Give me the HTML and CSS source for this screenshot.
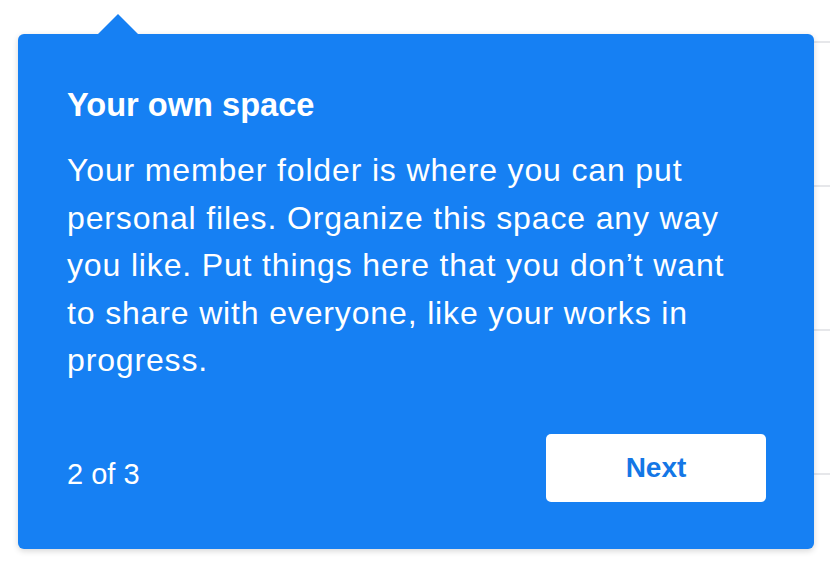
FILE: index.html
```html
<!DOCTYPE html>
<html lang="en">
<head>
<meta charset="utf-8">
<title>Your own space</title>
<link rel="stylesheet" href="styles.css">
</head>
<body>
<div class="page">
  <ul class="rows">
    <li class="row row-first"></li>
    <li class="row"></li>
    <li class="row"></li>
    <li class="row"></li>
  </ul>
</div>
<div class="tip" role="dialog" aria-labelledby="tip-title">
  <span class="tip-arrow"></span>
  <h2 class="tip-title" id="tip-title">Your own space</h2>
  <p class="tip-body">Your member folder is where you can put personal files. Organize this space any way you like. Put things here that you don’t want to share with everyone, like your works in progress.</p>
  <div class="tip-footer">
    <span class="tip-count">2 of 3</span>
    <button class="tip-next" type="button">Next</button>
  </div>
</div>
</body>
</html>
```

FILE: styles.css
```css
* { box-sizing: border-box; }
html, body { margin: 0; padding: 0; background: #ffffff; }
body {
  width: 830px;
  height: 570px;
  overflow: hidden;
  position: relative;
  font-family: "Liberation Sans", Arial, sans-serif;
}
.page { padding-left: 300px; }
.rows { list-style: none; margin: 0; padding: 0; }
.row {
  height: 144px;
  border-bottom: 2px solid #e6e7ea;
}
.row-first { height: 43px; }

.tip {
  position: absolute;
  left: 18px;
  top: 34px;
  width: 796px;
  height: 515px;
  background: #1680f3;
  border-radius: 6px;
  box-shadow: 0 2px 6px rgba(0, 0, 0, 0.16);
  color: #ffffff;
  padding: 51px 48px 47px 49px;
  display: flex;
  flex-direction: column;
}
.tip-arrow {
  position: absolute;
  left: 80px;
  top: -20px;
  width: 0;
  height: 0;
  border-left: 20px solid transparent;
  border-right: 20px solid transparent;
  border-bottom: 20px solid #1680f3;
}
.tip-title {
  margin: 0;
  font-size: 32.6px;
  line-height: 40px;
  font-weight: 700;
}
.tip-body {
  margin: 22px 0 0;
  max-width: 690px;
  font-size: 32px;
  line-height: 47.5px;
  letter-spacing: 0.85px;
}
.tip-footer {
  margin-top: auto;
  display: flex;
  align-items: center;
  justify-content: space-between;
}
.tip-count {
  font-size: 29px;
  line-height: 36px;
  padding-top: 12px;
}
.tip-next {
  width: 220px;
  height: 68px;
  border: 0;
  border-radius: 5px;
  background: #ffffff;
  color: #1477e6;
  font-family: "Liberation Sans", Arial, sans-serif;
  font-size: 28px;
  font-weight: 700;
  line-height: 68px;
  padding: 0;
}
```
